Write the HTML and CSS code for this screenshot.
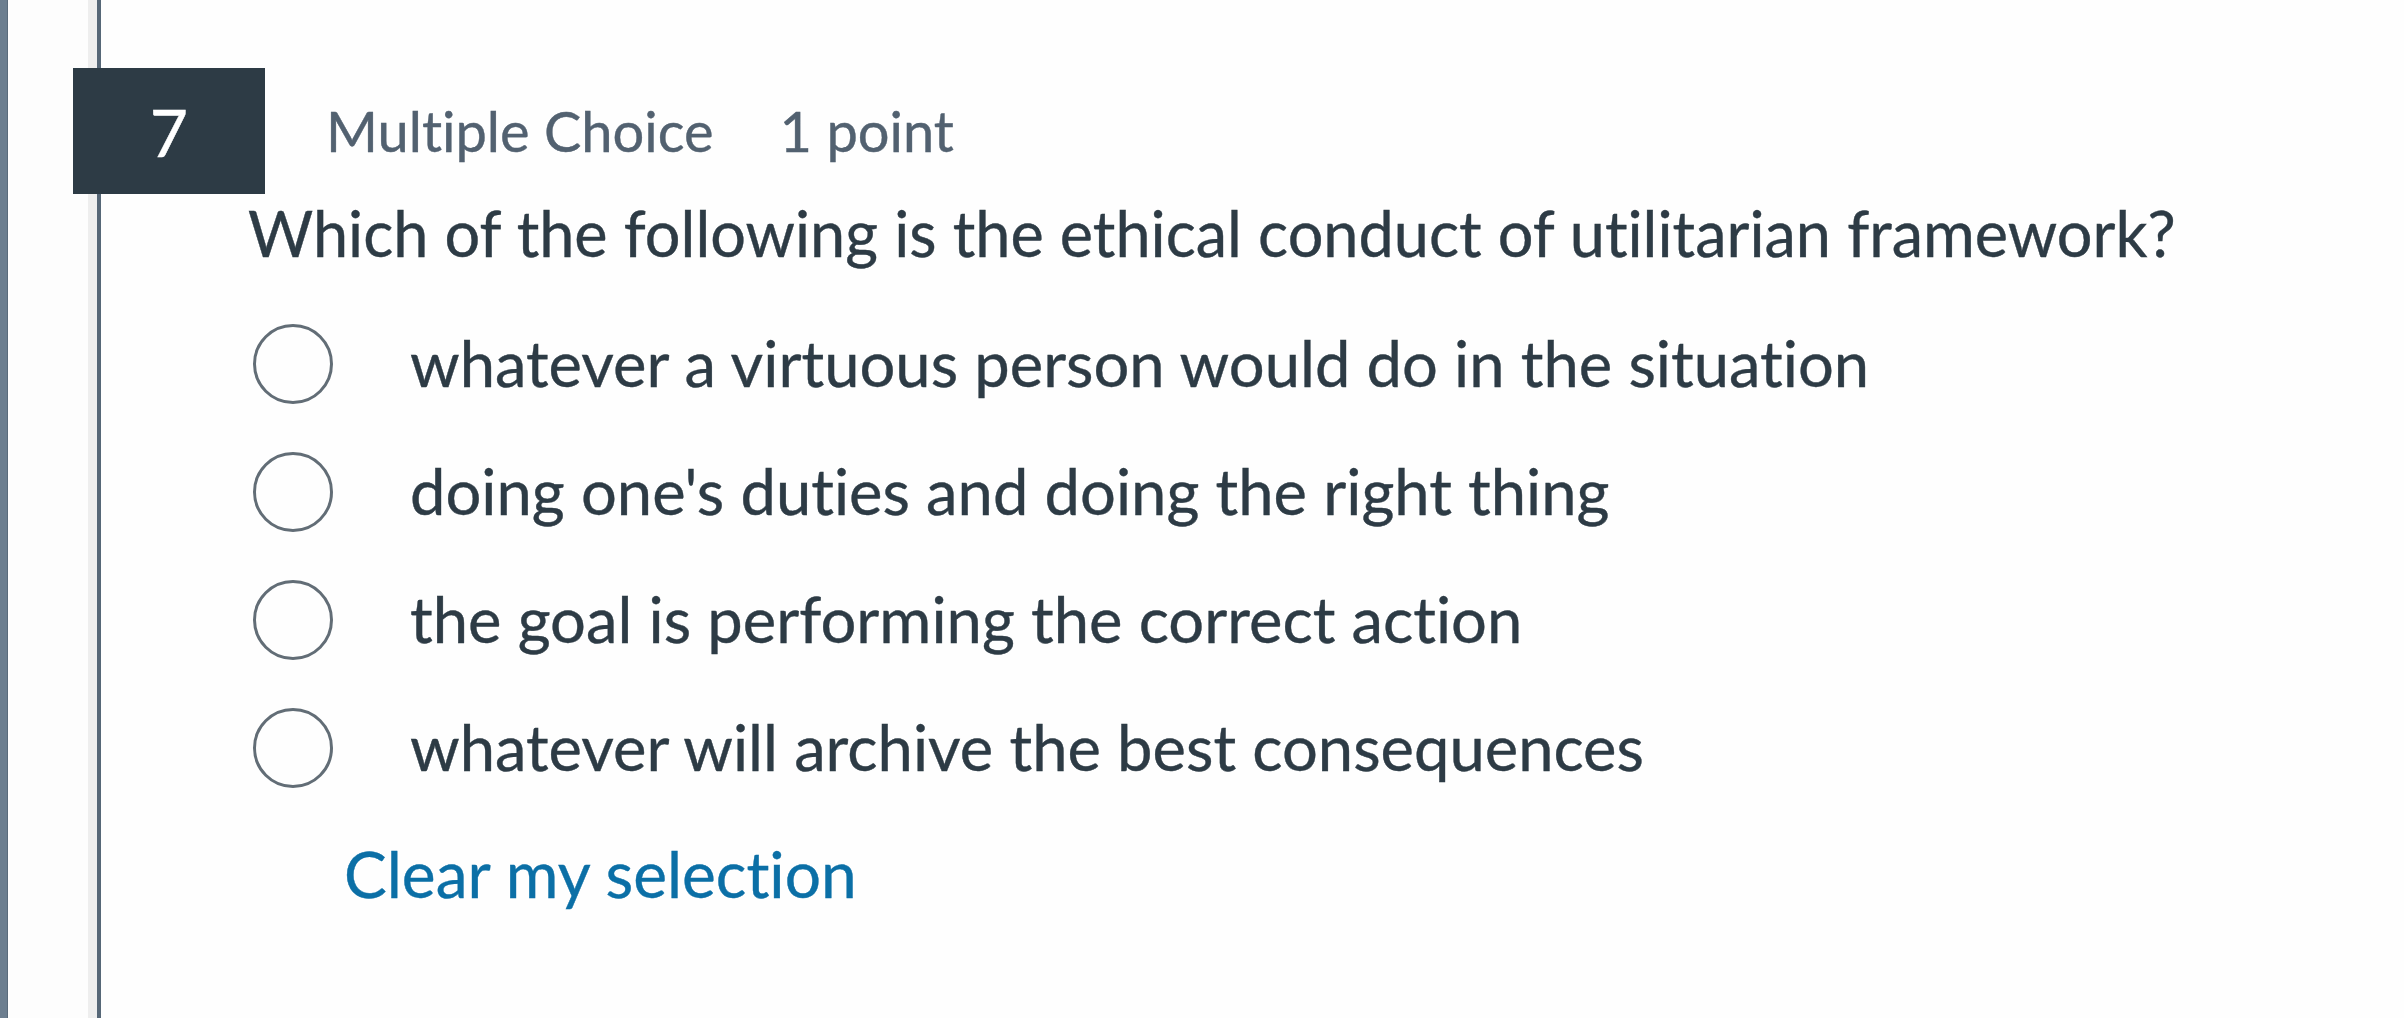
FILE: index.html
```html
<!DOCTYPE html>
<html lang="en">
<head>
<meta charset="utf-8">
<title>Question 7</title>
<link rel="stylesheet" href="styles.css">
</head>
<body>
<div class="page">
  <div class="edge"></div>
  <div class="gutter"></div>
  <div class="shade"></div>
  <main class="question">
    <header class="q-head">
      <div class="q-number">7</div>
      <div class="q-meta">
        <span class="q-type">Multiple Choice</span>
        <span class="q-points">1 point</span>
      </div>
    </header>
    <p class="q-text">Which of the following is the ethical conduct of utilitarian framework?</p>
    <ul class="choices">
      <li class="choice"><span class="radio"></span><span class="choice-text">whatever a virtuous person would do in the situation</span></li>
      <li class="choice"><span class="radio"></span><span class="choice-text">doing one's duties and doing the right thing</span></li>
      <li class="choice"><span class="radio"></span><span class="choice-text">the goal is performing the correct action</span></li>
      <li class="choice"><span class="radio"></span><span class="choice-text">whatever will archive the best consequences</span></li>
    </ul>
    <a class="clear-link" href="#">Clear my selection</a>
  </main>
</div>
</body>
</html>
```
FILE: styles.css
```css
html, body {
  margin: 0;
  padding: 0;
  height: 100%;
}
body {
  background: #fefefe;
  font-family: Lato, "Open Sans", sans-serif;
  font-variant-ligatures: none;
  color: #2d3b45;
  overflow: hidden;
  -webkit-text-stroke: 0.4px currentColor;
}
.page {
  display: flex;
  height: 1018px;
}
.edge {
  width: 7px;
  background: #6c7e8f;
  border-right: 1px solid #5a6b7b;
  flex: none;
}
.gutter {
  width: 80px;
  background: #fdfdfd;
  flex: none;
}
.shade {
  width: 9px;
  background: #eeeeee;
  flex: none;
}
.question {
  flex: 1;
  border-left: 4px solid #566777;
  background: #fefefe;
  padding-top: 68px;
}
.q-head {
  display: flex;
  align-items: center;
  height: 126px;
}
.q-number {
  margin-left: -28px;
  width: 192px;
  height: 126px;
  background: #2d3b45;
  color: #ffffff;
  font-size: 66px;
  display: flex;
  align-items: center;
  justify-content: center;
  flex: none;
}
.q-meta {
  display: flex;
  gap: 66px;
  margin-left: 61px;
  font-size: 56px;
  color: #526170;
  line-height: 1;
}
.q-text {
  margin: 0 0 0 147px;
  font-size: 63px;
  line-height: 78px;
}
.choices {
  list-style: none;
  margin: 30px 0 0 0;
  padding: 0 0 0 152px;
}
.choice {
  display: flex;
  align-items: center;
  height: 128px;
}
.radio {
  width: 74px;
  height: 74px;
  border: 3px solid #626d76;
  border-radius: 50%;
  flex: none;
  box-sizing: content-box;
  margin-top: -4px;
}
.choice-text {
  margin-left: 77px;
  padding-bottom: 6px;
  font-size: 63.3px;
  line-height: 1;
}
.clear-link {
  display: block;
  margin: 22px 0 0 243px;
  font-size: 64px;
  line-height: 76px;
  color: #0b6fa6;
  text-decoration: none;
}
```
